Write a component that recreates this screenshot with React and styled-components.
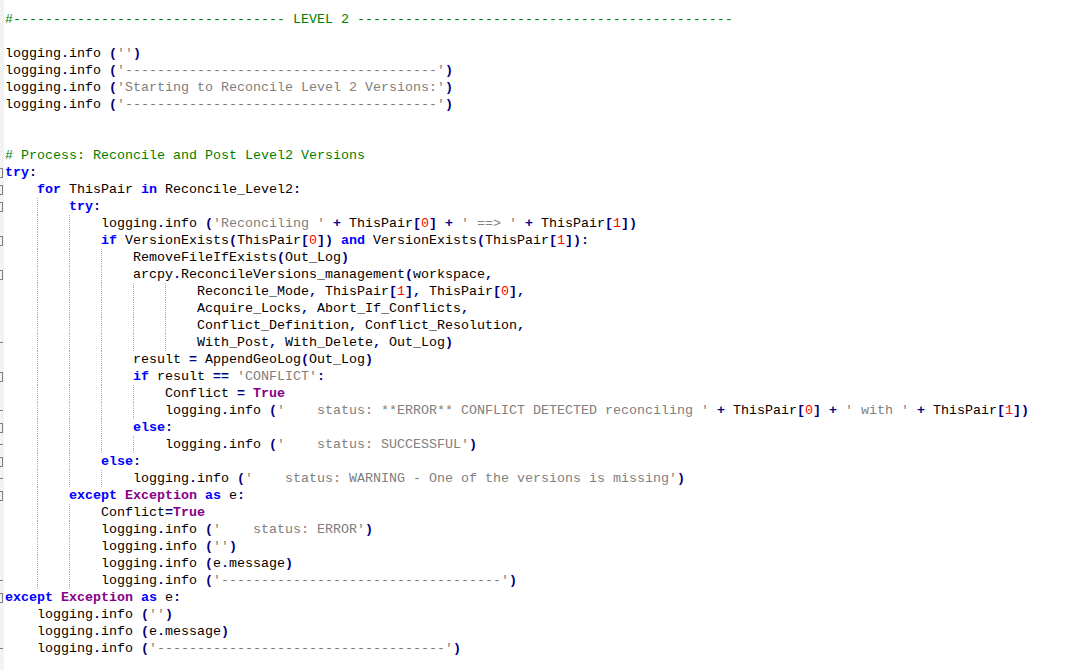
import React from 'react';
import styled, { createGlobalStyle } from 'styled-components';

const GlobalStyle = createGlobalStyle`
  html, body {
    margin: 0;
    padding: 0;
    background: #ffffff;
  }
`;

const Editor = styled.div`
  display: flex;
  min-height: 100vh;
  background: #ffffff;
  overflow: hidden;
`;

const FoldMargin = styled.div`
  width: 4px;
  flex: none;
  padding-top: 11px;
  background: repeating-conic-gradient(#e6e6e6 0 25%, #ffffff 0 50%) 0 0 / 2px 2px;
`;

const FoldCell = styled.div`
  height: 17px;
  display: flex;
  align-items: center;
`;

const FoldBox = styled.div`
  width: 2px;
  height: 8px;
  border: 1px solid #808080;
  border-left: none;
`;

const FoldTail = styled.div`
  width: 3px;
  height: 1px;
  background: #808080;
`;

const Code = styled.div`
  padding: 11px 0 0 1px;
  font-family: "Liberation Mono", "Courier New", monospace;
  font-size: 13.3333px;
  line-height: 17px;
  color: #000000;
`;

const Line = styled.div`
  height: 17px;
  white-space: pre;
`;

const Indent = styled.span`
  display: inline-block;
  width: 32px;
  height: 17px;
  vertical-align: top;
  box-sizing: border-box;
  border-left: ${(p) => (p.$guide ? '1px dotted #a8a8a8' : 'none')};
`;

const colors = {
  keyword: '#0000ff',
  builtin: '#880088',
  operator: '#000080',
  number: '#ff0000',
  string: '#808080',
  comment: '#008000',
  text: '#000000',
};

const Tok = styled.span`
  color: ${(p) => colors[p.$kind] || '#000000'};
  font-weight: ${(p) =>
    p.$kind === 'keyword' || p.$kind === 'operator' || p.$kind === 'builtin' ? 'bold' : 'normal'};
`;

const KEYWORDS = new Set(['try', 'for', 'in', 'if', 'and', 'else', 'except', 'as']);
const BUILTINS = new Set(['True', 'Exception']);

const dash = (n) => '-'.repeat(n);

const source = [
  '#' + dash(34) + ' LEVEL 2 ' + dash(47),
  '',
  "logging.info ('')",
  "logging.info ('" + dash(39) + "')",
  "logging.info ('Starting to Reconcile Level 2 Versions:')",
  "logging.info ('" + dash(39) + "')",
  '',
  '',
  '# Process: Reconcile and Post Level2 Versions',
  'try:',
  '    for ThisPair in Reconcile_Level2:',
  '        try:',
  "            logging.info ('Reconciling ' + ThisPair[0] + ' ==> ' + ThisPair[1])",
  '            if VersionExists(ThisPair[0]) and VersionExists(ThisPair[1]):',
  '                RemoveFileIfExists(Out_Log)',
  '                arcpy.ReconcileVersions_management(workspace,',
  '                        Reconcile_Mode, ThisPair[1], ThisPair[0],',
  '                        Acquire_Locks, Abort_If_Conflicts,',
  '                        Conflict_Definition, Conflict_Resolution,',
  '                        With_Post, With_Delete, Out_Log)',
  '                result = AppendGeoLog(Out_Log)',
  "                if result == 'CONFLICT':",
  '                    Conflict = True',
  "                    logging.info ('    status: **ERROR** CONFLICT DETECTED reconciling ' + ThisPair[0] + ' with ' + ThisPair[1])",
  '                else:',
  "                    logging.info ('    status: SUCCESSFUL')",
  '            else:',
  "                logging.info ('    status: WARNING - One of the versions is missing')",
  '        except Exception as e:',
  '            Conflict=True',
  "            logging.info ('    status: ERROR')",
  "            logging.info ('')",
  '            logging.info (e.message)',
  "            logging.info ('" + dash(35) + "')",
  'except Exception as e:',
  "    logging.info ('')",
  '    logging.info (e.message)',
  "    logging.info ('" + dash(36) + "')",
];

// fold margin markers by line number (1-based)
const foldOpen = new Set([10, 11, 12, 14, 16, 22, 25, 27, 29, 35]);
const foldTail = new Set([20, 24, 26, 28, 34, 38]);

function tokenize(text) {
  const out = [];
  const re = /(#.*$)|('[^']*')|(\d+)|([A-Za-z_][A-Za-z0-9_]*)|([()\[\]:,.=+<>*\-])|(\s+)/g;
  let m;
  while ((m = re.exec(text)) !== null) {
    if (m[1]) out.push(['comment', m[1]]);
    else if (m[2]) out.push(['string', m[2]]);
    else if (m[3]) out.push(['number', m[3]]);
    else if (m[4]) {
      const w = m[4];
      out.push([KEYWORDS.has(w) ? 'keyword' : BUILTINS.has(w) ? 'builtin' : 'text', w]);
    } else if (m[5]) out.push(['operator', m[5]]);
    else out.push(['text', m[6]]);
  }
  return out;
}

function CodeLine({ text }) {
  const indent = text.length - text.trimStart().length;
  const levels = text.trim() ? Math.floor(indent / 4) : 0;
  const body = text.slice(levels * 4);
  return (
    <Line>
      {Array.from({ length: levels }, (_, i) => (
        <Indent key={i} $guide={i > 0} />
      ))}
      {body.length === 0 ? ' ' : tokenize(body).map(([kind, t], i) => (
        <Tok key={i} $kind={kind}>{t}</Tok>
      ))}
    </Line>
  );
}

export default function App() {
  return (
    <>
      <GlobalStyle />
      <Editor>
        <FoldMargin>
          {source.map((_, i) => (
            <FoldCell key={i}>
              {foldOpen.has(i + 1) && <FoldBox />}
              {foldTail.has(i + 1) && <FoldTail />}
            </FoldCell>
          ))}
        </FoldMargin>
        <Code>
          {source.map((line, i) => (
            <CodeLine key={i} text={line} />
          ))}
        </Code>
      </Editor>
    </>
  );
}
